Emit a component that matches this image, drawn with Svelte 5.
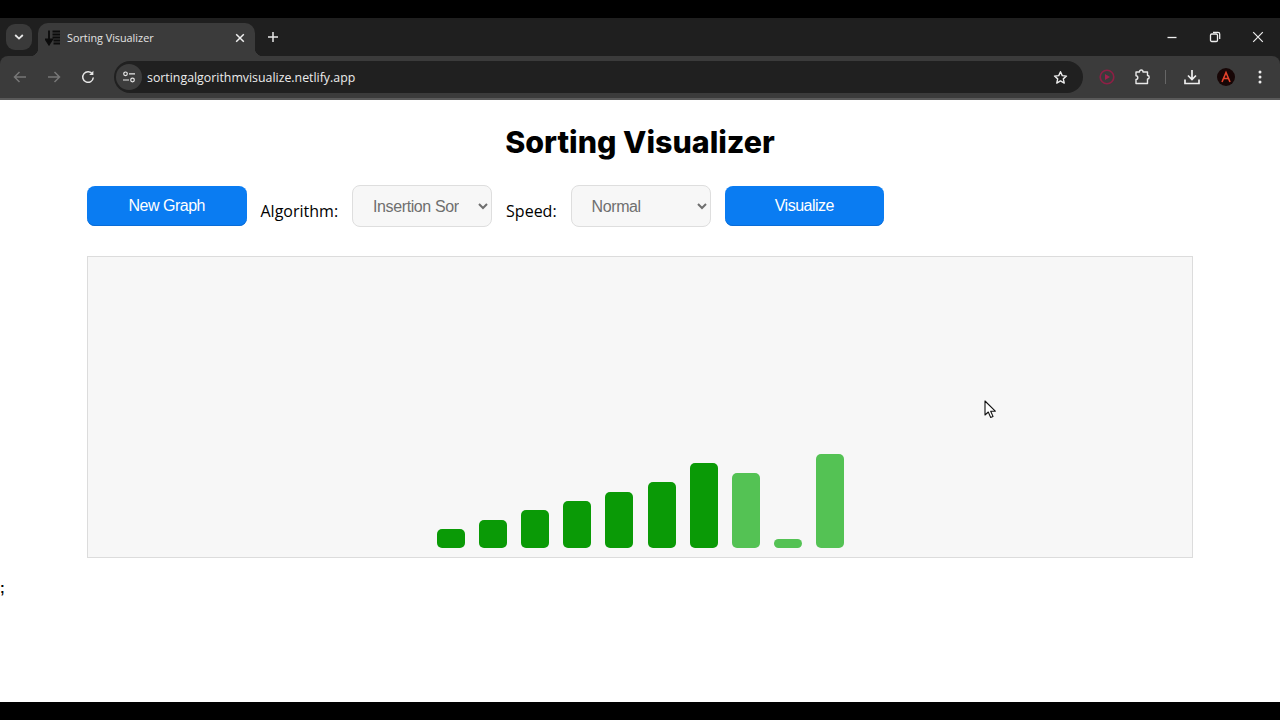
<script>
	const bars = [
		{ h: 19, done: true },
		{ h: 28, done: true },
		{ h: 38, done: true },
		{ h: 47, done: true },
		{ h: 56, done: true },
		{ h: 66, done: true },
		{ h: 85, done: true },
		{ h: 75, done: false },
		{ h: 9, done: false },
		{ h: 94, done: false }
	];
</script>

<div class="screen">
	<div class="letterbox"></div>

	<div class="tabstrip">
		<button class="tab-search" aria-label="Search tabs">
			<svg width="10" height="6" viewBox="0 0 10 6"><path d="M1.2 1 L5 4.6 L8.8 1" fill="none" stroke="#e8e8e8" stroke-width="1.8" /></svg>
		</button>
		<div class="tab">
			<svg class="favicon" width="16" height="16" viewBox="0 0 16 16">
				<path d="M4 0.5 V11 M0.8 9.5 H7.2 L4 14.5 Z" fill="#0c0c0c" stroke="#0c0c0c" stroke-width="1.8" />
				<path d="M7.5 1.5 H15 M7.5 4.5 H15 M7.5 7.5 H15 M8.5 10.5 H15 M8.5 13.5 H15" stroke="#0c0c0c" stroke-width="1.8" />
			</svg>
			<span class="tab-title">Sorting Visualizer</span>
			<svg class="tab-close" width="10" height="10" viewBox="0 0 10 10"><path d="M1.2 1.2 L8.8 8.8 M8.8 1.2 L1.2 8.8" stroke="#f0f0f0" stroke-width="1.5" /></svg>
		</div>
		<svg class="new-tab" width="12" height="12" viewBox="0 0 12 12"><path d="M6 1 V11 M1 6 H11" stroke="#e8e8e8" stroke-width="1.5" /></svg>
		<div class="window-controls">
			<svg width="12" height="12" viewBox="0 0 12 12"><path d="M1.5 6.5 H10.5" stroke="#eee" stroke-width="1.3" /></svg>
			<svg width="12" height="12" viewBox="0 0 12 12"><rect x="1.5" y="3" width="7" height="7.5" rx="1.3" fill="none" stroke="#eee" stroke-width="1.3" /><path d="M4 1.3 H9 Q10.7 1.3 10.7 3 V8" fill="none" stroke="#eee" stroke-width="1.3" /></svg>
			<svg width="12" height="12" viewBox="0 0 12 12"><path d="M1.2 1.2 L10.8 10.8 M10.8 1.2 L1.2 10.8" stroke="#eee" stroke-width="1.2" /></svg>
		</div>
	</div>

	<div class="toolbar">
		<svg class="nav-back" width="14" height="12" viewBox="0 0 14 12"><path d="M13 6 H2 M6.5 1 L1.5 6 L6.5 11" fill="none" stroke="#777" stroke-width="1.5" /></svg>
		<svg class="nav-forward" width="14" height="12" viewBox="0 0 14 12"><path d="M1 6 H12 M7.5 1 L12.5 6 L7.5 11" fill="none" stroke="#777" stroke-width="1.5" /></svg>
		<svg class="nav-reload" width="14" height="14" viewBox="0 0 14 14"><path d="M11.5 4.2 A5.3 5.3 0 1 0 12.3 7.5" fill="none" stroke="#e6e6e6" stroke-width="1.5" /><path d="M12.4 0.8 V5 H8.2 Z" fill="#e6e6e6" /></svg>
		<div class="omnibox">
			<span class="site-info">
				<svg width="14" height="12" viewBox="0 0 14 12">
					<circle cx="3.5" cy="2.8" r="1.8" fill="none" stroke="#e8e8e8" stroke-width="1.2" />
					<path d="M7 2.8 H13 M1 9 H7" stroke="#e8e8e8" stroke-width="1.2" />
					<circle cx="10.5" cy="9" r="1.8" fill="none" stroke="#e8e8e8" stroke-width="1.2" />
				</svg>
			</span>
			<span class="url">sortingalgorithmvisualize.netlify.app</span>
			<svg class="star" width="15" height="15" viewBox="0 0 24 24"><path d="M12 2.8 L14.8 9 L21.6 9.7 L16.5 14.2 L18 20.9 L12 17.4 L6 20.9 L7.5 14.2 L2.4 9.7 L9.2 9 Z" fill="none" stroke="#eee" stroke-width="2.2" stroke-linejoin="round" /></svg>
		</div>
		<div class="extensions">
			<svg width="16" height="16" viewBox="0 0 16 16"><circle cx="8" cy="8" r="6.8" fill="none" stroke="#8e1f45" stroke-width="1.6" /><path d="M6 5 L11 8 L6 11 Z" fill="#a3204e" /></svg>
			<svg class="puzzle" width="16" height="16" viewBox="0 0 16 16"><path d="M5.5 3 Q5.5 1 7.3 1 Q9 1 9 3 H13.5 V6.5 Q15.2 6.5 15.2 8.2 Q15.2 10 13.5 10 V14.5 H2 V10.5 Q3.8 10.5 3.8 8.6 Q3.8 6.8 2 6.8 V3 Z" fill="none" stroke="#e8e8e8" stroke-width="1.4" stroke-linejoin="round" /></svg>
			<span class="divider"></span>
			<svg width="16" height="16" viewBox="0 0 16 16"><path d="M8 1 V10 M4 6.5 L8 10.5 L12 6.5" fill="none" stroke="#eee" stroke-width="1.7" /><path d="M1 10.5 V14.5 H15 V10.5" fill="none" stroke="#eee" stroke-width="1.7" /></svg>
			<span class="avatar">
				<svg width="18" height="18" viewBox="0 0 18 18"><circle cx="9" cy="9" r="9" fill="#170606" /><path d="M5 14 L9 4.5 L13 14 M6.8 10.5 H11" fill="none" stroke="#e5432c" stroke-width="1.6" /></svg>
			</span>
			<svg class="menu" width="4" height="14" viewBox="0 0 4 14"><circle cx="2" cy="2" r="1.5" fill="#eee" /><circle cx="2" cy="7" r="1.5" fill="#eee" /><circle cx="2" cy="12" r="1.5" fill="#eee" /></svg>
		</div>
	</div>

	<main class="page">
		<h1>Sorting Visualizer</h1>
		<div class="controls">
			<button class="primary">New Graph</button>
			<label class="field">
				<span>Algorithm:</span>
				<select>
					<option>Insertion Sort</option>
					<option>Bubble Sort</option>
					<option>Selection Sort</option>
				</select>
			</label>
			<label class="field">
				<span>Speed:</span>
				<select>
					<option>Normal</option>
					<option>Slow</option>
					<option>Fast</option>
				</select>
			</label>
			<button class="primary">Visualize</button>
		</div>

		<div class="chart">
			{#each bars as bar}
				<div class="bar" class:done={bar.done} style="height: {bar.h}px"></div>
			{/each}
		</div>

		<p class="stray">;</p>

		<svg class="cursor" width="13" height="19" viewBox="0 0 13 19"><path d="M1 1 V15 L4.3 12 L6.6 17.4 L9 16.4 L6.7 11.2 H11.3 Z" fill="#fff" stroke="#111" stroke-width="1.1" stroke-linejoin="round" /></svg>
	</main>

	<div class="letterbox"></div>
</div>

<style>
	:global(body) {
		margin: 0;
		background: #fff;
	}

	.screen {
		display: flex;
		flex-direction: column;
		width: 1280px;
		height: 720px;
		overflow: hidden;
		background: #1f1f1f;
		font-family: "Liberation Sans", Arial, sans-serif;
	}

	.letterbox {
		height: 18px;
		background: #000;
		flex-shrink: 0;
	}

	/* browser chrome */
	.tabstrip {
		display: flex;
		align-items: center;
		height: 38px;
		background: #1f1f1f;
		flex-shrink: 0;
	}

	.tab-search {
		display: flex;
		align-items: center;
		justify-content: center;
		width: 26px;
		height: 26px;
		margin-left: 6px;
		padding: 0;
		border: none;
		border-radius: 9px;
		background: #3a3a3a;
	}

	.tab {
		position: relative;
		display: flex;
		align-items: center;
		width: 217px;
		height: 33px;
		margin: 5px 0 0 6px;
		padding: 0 6px 4px 7px;
		box-sizing: border-box;
		background: #3b3b3b;
		border-radius: 10px 10px 0 0;
	}

	/* flared bottom corners of the active tab */
	.tab::before,
	.tab::after {
		content: "";
		position: absolute;
		bottom: 0;
		width: 8px;
		height: 8px;
	}

	.tab::before {
		left: -8px;
		background: radial-gradient(circle at 0 0, transparent 8px, #3b3b3b 8.5px);
	}

	.tab::after {
		right: -8px;
		background: radial-gradient(circle at 100% 0, transparent 8px, #3b3b3b 8.5px);
	}

	.favicon {
		flex-shrink: 0;
	}

	.tab-title {
		flex: 1;
		margin-left: 6px;
		font-family: "Open Sans", sans-serif;
		font-size: 10.8px;
		color: #e4e4e4;
	}

	.tab-close {
		margin-right: 4px;
	}

	.new-tab {
		margin-left: 12px;
	}

	.window-controls {
		display: flex;
		align-items: center;
		gap: 31px;
		margin-left: auto;
		margin-right: 16px;
	}

	.toolbar {
		display: flex;
		align-items: center;
		height: 42px;
		background: #3b3b3b;
		border-bottom: 2px solid #5a5a5a;
		border-radius: 8px 8px 0 0;
		flex-shrink: 0;
	}

	.nav-back {
		margin-left: 13px;
	}

	.nav-forward {
		margin-left: 20px;
	}

	.nav-reload {
		margin-left: 20px;
	}

	.omnibox {
		display: flex;
		align-items: center;
		width: 969px;
		height: 32px;
		margin-left: 19px;
		padding-left: 1px;
		box-sizing: border-box;
		background: #202020;
		border-radius: 16px;
	}

	.site-info {
		display: flex;
		align-items: center;
		justify-content: center;
		width: 26px;
		height: 26px;
		margin-left: 1px;
		border-radius: 50%;
		background: #3d3d3d;
	}

	.url {
		margin-left: 5px;
		font-family: "Open Sans", sans-serif;
		font-size: 12.35px;
		color: #ececec;
	}

	.star {
		margin-left: auto;
		margin-right: 15px;
	}

	.extensions {
		display: flex;
		align-items: center;
		margin-left: 16px;
	}

	.puzzle {
		margin-left: 19px;
	}

	.divider {
		width: 1px;
		height: 14px;
		margin: 0 18px 0 15px;
		background: #666;
	}

	.avatar {
		display: flex;
		margin-left: 17px;
	}

	.menu {
		margin-left: 23px;
	}

	/* page */
	.page {
		position: relative;
		flex: 1;
		background: #fff;
	}

	h1 {
		margin: 0;
		padding-top: 24px;
		text-align: center;
		font-family: Inter, sans-serif;
		font-size: 30.4px;
		font-weight: 800;
		line-height: 36px;
		color: #000;
	}

	.controls {
		display: flex;
		align-items: flex-start;
		gap: 14px;
		margin-top: 25px;
		padding-left: 87px;
	}

	.primary {
		width: 159.5px;
		height: 40px;
		margin-top: 1px;
		padding: 0 0 1px;
		border: none;
		border-radius: 8px;
		background: #0a7cf2;
		box-shadow: inset 0 -1px 0 #0a6cd6;
		color: #fff;
		font-family: "Liberation Sans", Arial, sans-serif;
		font-size: 16px;
		letter-spacing: -0.5px;
	}

	.field {
		display: flex;
		align-items: flex-start;
		gap: 14px;
	}

	.field span {
		margin-top: 16px;
		font-family: "Open Sans", sans-serif;
		font-size: 16px;
		line-height: 20px;
		color: #000;
	}

	select {
		width: 140px;
		height: 42px;
		padding: 0 16px;
		border: 1px solid #dedede;
		border-radius: 8px;
		background: #f7f7f7;
		color: #6f6f6f;
		font-family: "Liberation Sans", Arial, sans-serif;
		font-size: 16px;
		letter-spacing: -0.4px;
	}

	.chart {
		display: flex;
		align-items: flex-end;
		justify-content: center;
		gap: 14.15px;
		height: 302px;
		margin: 29px 87px 0;
		padding: 0 0 9px 1px;
		box-sizing: border-box;
		border: 1px solid #dcdcdc;
		background: #f7f7f7;
	}

	.bar {
		width: 28px;
		border-radius: 5px;
		background: #54c254;
	}

	.bar.done {
		background: #0a9a06;
	}

	.stray {
		margin: 21px 0 0;
		font-family: "Liberation Sans", Arial, sans-serif;
		font-size: 14px;
		font-weight: 700;
		line-height: 18px;
		color: #000;
	}

	/* mouse pointer sits over the chart */
	.cursor {
		position: absolute;
		left: 984px;
		top: 300px;
	}
</style>
